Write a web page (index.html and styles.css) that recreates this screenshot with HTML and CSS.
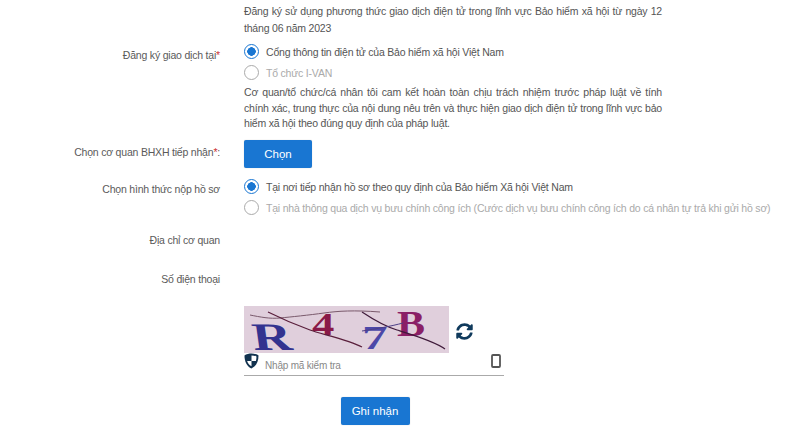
FILE: index.html
```html
<!DOCTYPE html>
<html lang="vi">
<head>
<meta charset="utf-8">
<title>Đăng ký giao dịch</title>
<link rel="stylesheet" href="styles.css">
</head>
<body>
<main class="form">
  <div class="row row-intro">
    <div class="label"></div>
    <p class="para">Đăng ký sử dụng phương thức giao dịch điện tử trong lĩnh vực Bảo hiểm xã hội từ ngày 12 tháng 06 năm 2023</p>
  </div>
  <div class="row row-portal">
    <div class="label label-portal">Đăng ký giao dịch tại<span class="req">*</span></div>
    <div class="field">
      <div class="radio on"><span class="dot"></span><span>Cổng thông tin điện tử của Bảo hiểm xã hội Việt Nam</span></div>
      <div class="radio off"><span class="dot"></span><span>Tổ chức I-VAN</span></div>
      <p class="para para-commit">Cơ quan/tổ chức/cá nhân tôi cam kết hoàn toàn chịu trách nhiệm trước pháp luật về tính chính xác, trung thực của nội dung nêu trên và thực hiện giao dịch điện tử trong lĩnh vực bảo hiểm xã hội theo đúng quy định của pháp luật.</p>
    </div>
  </div>
  <div class="row row-choose">
    <div class="label label-choose">Chọn cơ quan BHXH tiếp nhận<span class="req">*</span>:</div>
    <button class="btn btn-choose" type="button">Chọn</button>
  </div>
  <div class="row row-method">
    <div class="label label-radio">Chọn hình thức nộp hồ sơ</div>
    <div class="field">
      <div class="radio on"><span class="dot"></span><span>Tại nơi tiếp nhận hồ sơ theo quy định của Bảo hiểm Xã hội Việt Nam</span></div>
      <div class="radio off"><span class="dot"></span><span>Tại nhà thông qua dịch vụ bưu chính công ích (Cước dịch vụ bưu chính công ích do cá nhân tự trả khi gửi hồ sơ)</span></div>
    </div>
  </div>
  <div class="row row-address"><div class="label">Địa chỉ cơ quan</div></div>
  <div class="row row-phone"><div class="label">Số điện thoại</div></div>
  <div class="row row-captcha">
    <div class="label"></div>
    <div class="captcha-box">
      <div class="captcha-line">
        <svg class="captcha" viewBox="0 0 205 47" width="205" height="47" role="img" aria-label="Mã kiểm tra">
          <rect width="205" height="47" fill="#e0cfdc"/>
          <text class="cap-r" transform="translate(10 44) skewX(8) scale(1.4 1)">R</text>
          <text class="cap-4" transform="translate(68 29) scale(1.4 1)">4</text>
          <text class="cap-7" transform="translate(118 43) scale(1.5 1)">7</text>
          <text class="cap-b" transform="translate(153 30) scale(1.2 1)">B</text>
          <path d="M6 9C16 11 26 13 36 12S66 9 80 7S110 4 136 6" fill="none" stroke="#7a5a6c" stroke-width="1"/>
          <path d="M24 6C40 14 55 20 66 24S105 34 118 41" fill="none" stroke="#5a1f3c" stroke-width="1.2"/>
          <path d="M118 6C130 14 140 20 153 24S190 35 201 43" fill="none" stroke="#3f1a3a" stroke-width="1.2"/>
          <path d="M118 25C132 23 148 20 159 17" fill="none" stroke="#4c3f86" stroke-width="1"/>
        </svg>
        <svg class="refresh" viewBox="0 0 512 512" width="17" height="17" aria-hidden="true">
          <path fill="#0f3a5c" d="M370.72 133.28C339.458 104.008 298.888 87.962 255.848 88c-77.458.068-144.328 53.178-162.791 126.85-1.344 5.363-6.122 9.15-11.651 9.15H24.103c-7.498 0-13.194-6.807-11.807-14.176C33.933 94.924 134.813 8 256 8c66.448 0 126.791 26.136 171.315 68.685L463.03 40.97C478.149 25.851 504 36.559 504 57.941V192c0 13.255-10.745 24-24 24H345.941c-21.382 0-32.09-25.851-16.971-40.971l41.75-41.749zM32 296h134.059c21.382 0 32.09 25.851 16.971 40.971l-41.75 41.75c31.262 29.273 71.835 45.319 114.876 45.28 77.418-.07 144.315-53.144 162.787-126.849 1.344-5.363 6.122-9.15 11.651-9.15h57.304c7.498 0 13.194 6.807 11.807 14.176C478.067 417.076 377.187 504 256 504c-66.448 0-126.791-26.136-171.315-68.685L48.97 471.03C33.851 486.149 8 475.441 8 454.059V320c0-13.255 10.745-24 24-24z"/>
        </svg>
      </div>
      <div class="input-line">
        <svg class="shield" viewBox="0 0 16 17" width="15" height="16" aria-hidden="true">
          <path fill="#12324f" d="M8 .5C5.500 .5 2.500 1 .5 2.500.5 9 3 14 8 16.500c5-2.500 7.500-7.500 7.500-14C13.500 1 10.500 .5 8 .5z"/>
          <path fill="#fff" d="M8 2.500c1.800 0 3.800.3 5.300 1.100 0 1.700-.2 3.300-.6 4.900H8zM8 8.500v5.700C5.500 12.600 4 10.800 3.300 8.500z"/>
        </svg>
        <span class="placeholder">Nhập mã kiểm tra</span>
        <svg class="phone" viewBox="0 0 10 14" width="10" height="14" aria-hidden="true">
          <rect x="1" y="1" width="8" height="12" rx="1" fill="none" stroke="#555" stroke-width="1.800"/>
        </svg>
      </div>
    </div>
  </div>
  <div class="actions"><button class="btn btn-submit" type="button">Ghi nhận</button></div>
</main>
</body>
</html>
```
FILE: styles.css
```css
html, body { margin: 0; padding: 0; background: #fff; }
body { width: 800px; height: 429px; overflow: hidden; font-family: "Liberation Sans", Roboto, sans-serif; font-size: 10.5px; letter-spacing: -0.2px; color: #555; }
.form { display: flex; flex-direction: column; }
.row { display: grid; grid-template-columns: 220px 1fr; column-gap: 24px; align-items: start; }
.label { text-align: right; color: #5a5a5a; line-height: 16px; }
.req { color: #c33; }
.para { margin: 0; width: 418px; text-align: justify; line-height: 16px; color: #555; }
.row-intro { padding-top: 3px; }
.row-intro .para { line-height: 17px; }
.row-portal { margin-top: 4px; }
.label-portal { padding-top: 6px; }
.label-radio { padding-top: 5px; }
.field { display: flex; flex-direction: column; min-width: 0; }
.radio { display: flex; align-items: center; gap: 7px; height: 21px; white-space: nowrap; color: #555; }
.radio.off { color: #aaa; }
.dot { box-sizing: border-box; flex: none; width: 15px; height: 15px; border-radius: 50%; border: 1.5px solid #aaa; background: #fff; }
.radio.on .dot { border-color: #1976d2; background: radial-gradient(circle, #1976d2 0 4px, #fff 4.5px); }
.para-commit { margin-top: 2px; line-height: 15.5px; }
.row-choose { margin-top: 8.5px; align-items: start; }
.label-choose { padding-top: 4px; }
.btn { border: 0; border-radius: 2px; background: #1976d2; color: #fff; font-family: inherit; padding: 0; box-shadow: 0 0 1px rgba(0,0,0,.3); }
.btn-choose { width: 68px; height: 28px; font-size: 11.5px; }
.row-method { margin-top: 8px; }
.row-address { margin-top: 14px; }
.row-phone { margin-top: 23px; }
.row-captcha { margin-top: 19px; }
.captcha-box { width: 260px; }
.captcha-line { display: flex; align-items: center; gap: 7px; }
.captcha { display: block; flex: none; overflow: visible; }
.refresh { margin-top: 3px; }
.cap-r, .cap-4, .cap-7, .cap-b { font-family: "Liberation Serif", serif; font-weight: 700; letter-spacing: 0; }
.cap-r { font-size: 39px; fill: #33338f; }
.cap-4 { font-size: 32px; fill: #8a1a48; }
.cap-7 { font-size: 34px; fill: #4c48a8; }
.cap-b { font-size: 35px; fill: #8a1f66; }
.input-line { display: flex; align-items: center; height: 22px; border-bottom: 1px solid #aaa; position: relative; }
.shield { flex: none; margin-top: -6px; }
.placeholder { margin-left: 6px; color: #888; font-size: 10px; margin-top: 2px; }
.phone { flex: none; margin-left: auto; margin-right: 3px; margin-top: -6px; }
.actions { display: flex; justify-content: center; width: 750px; margin-top: 21px; }
.btn-submit { width: 69px; height: 28px; font-size: 11.5px; }
```
